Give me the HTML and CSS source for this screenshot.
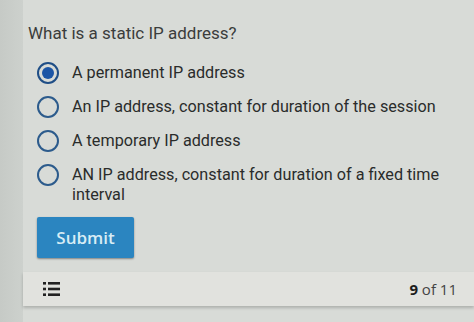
FILE: index.html
```html
<!DOCTYPE html>
<html>
<head>
<meta charset="utf-8">
<link rel="stylesheet" href="styles.css">
</head>
<body>
<div class="screen">
  <div class="gutter"></div>
  <div class="card">
    <div class="content">
      <div class="question">What is a static IP address?</div>
      <div class="options">
        <label class="option"><span class="radio checked"><span class="dot"></span></span><span class="label">A permanent IP address</span></label>
        <label class="option"><span class="radio"></span><span class="label">An IP address, constant for duration of the session</span></label>
        <label class="option"><span class="radio"></span><span class="label">A temporary IP address</span></label>
        <label class="option"><span class="radio"></span><span class="label">AN IP address, constant for duration of a fixed time interval</span></label>
      </div>
      <button class="submit">Submit</button>
    </div>
    <div class="footer">
      <svg class="list-icon" width="17" height="14" viewBox="0 0 17 14">
        <rect x="0" y="0" width="3" height="2.6" fill="#222"/>
        <rect x="5" y="0" width="12" height="2.6" fill="#222"/>
        <rect x="0" y="5.7" width="3" height="2.6" fill="#222"/>
        <rect x="5" y="5.7" width="12" height="2.6" fill="#222"/>
        <rect x="0" y="11.4" width="3" height="2.6" fill="#222"/>
        <rect x="5" y="11.4" width="12" height="2.6" fill="#222"/>
      </svg>
      <div class="counter"><b>9</b> of 11</div>
    </div>
  </div>
</div>
</body>
</html>
```
FILE: styles.css
```css
html, body {
  margin: 0;
  padding: 0;
}
body {
  width: 474px;
  height: 322px;
  overflow: hidden;
  background: #c9cdc9;
  font-family: Roboto, "Liberation Sans", sans-serif;
}
.screen {
  display: flex;
  height: 322px;
}
.gutter {
  width: 23px;
  flex: none;
  background: linear-gradient(90deg, #c6cac6, #cdd1cd);
}
.card {
  flex: 1;
  display: flex;
  flex-direction: column;
  background: #d8dbd7;
}
.content {
  padding: 23px 0 0 5px;
  height: 252px;
  box-sizing: border-box;
}
.question {
  font-size: 17px;
  line-height: 20px;
  color: #3b3d3c;
}
.options {
  display: flex;
  flex-direction: column;
  gap: 13px;
  margin-top: 20px;
  padding-left: 9px;
}
.option {
  display: flex;
  align-items: flex-start;
  gap: 13px;
}
.radio {
  flex: none;
  width: 22px;
  height: 22px;
  box-sizing: border-box;
  border: 2px solid #2c5b8c;
  border-radius: 50%;
  display: flex;
  align-items: center;
  justify-content: center;
  margin-top: -1px;
}
.radio.checked {
  border: 2.5px solid #1f4e86;
}
.dot {
  width: 12px;
  height: 12px;
  border-radius: 50%;
  background: #1b55a6;
}
.label {
  font-size: 16.2px;
  line-height: 20px;
  color: #2a2c2b;
  max-width: 375px;
}
.submit {
  margin-top: 12px;
  margin-left: 9px;
  width: 97px;
  height: 41px;
  border: none;
  border-radius: 2px;
  background: #2b85c0;
  color: #d8ecf5;
  font-family: "Open Sans", sans-serif;
  font-size: 17px;
  font-weight: 600;
  box-shadow: 0 1px 2px rgba(0,0,0,0.4);
  padding: 0;
}
.footer {
  height: 34px;
  margin-top: 20px;
  background: #e1e2de;
  display: flex;
  align-items: center;
  justify-content: space-between;
  padding: 0 17px 0 20px;
  box-shadow: 0 2px 3px rgba(0,0,0,0.2);
}
.list-icon {
  display: block;
}
.counter {
  font-family: "Open Sans", sans-serif;
  font-size: 15px;
  color: #444;
}
.counter b {
  color: #1c1c1c;
  font-weight: 700;
}
```
